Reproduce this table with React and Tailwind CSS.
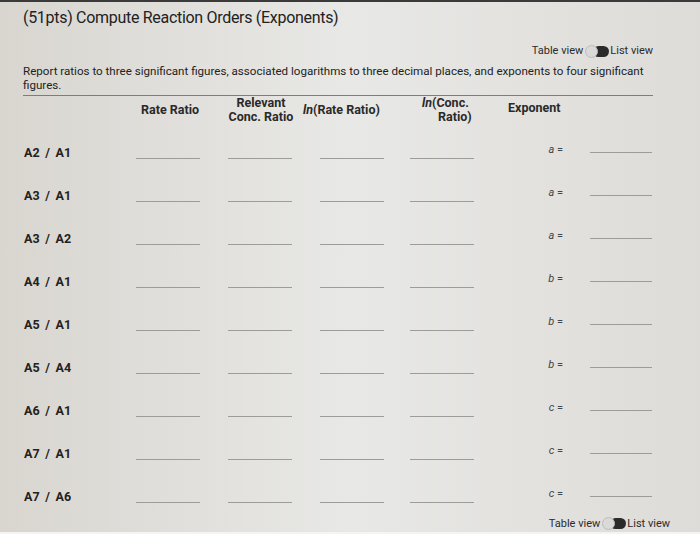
const ROWS = [
  { label: "A2 / A1", v: "a" },
  { label: "A3 / A1", v: "a" },
  { label: "A3 / A2", v: "a" },
  { label: "A4 / A1", v: "b" },
  { label: "A5 / A1", v: "b" },
  { label: "A5 / A4", v: "b" },
  { label: "A6 / A1", v: "c" },
  { label: "A7 / A1", v: "c" },
  { label: "A7 / A6", v: "c" },
];

function ViewToggle() {
  return (
    <div className="flex items-center text-[11px] text-[#2b2b2b]">
      <span>Table view</span>
      <span className="relative ml-[2px] mr-[1px] flex h-[13px] w-[24px] items-center">
        <span className="absolute right-0 h-[11px] w-[16px] rounded-full bg-[#2a2a2a]" />
        <span className="absolute left-0 h-[13px] w-[13px] rounded-full border border-[#bdbdbd] bg-[#d9d9d7]" />
      </span>
      <span>List view</span>
    </div>
  );
}

function Blank() {
  return <div className="mt-[10px] h-px w-[64px] bg-[#9c9c9a]" />;
}

export default function App() {
  return (
    <div
      className="flex h-[534px] w-[700px] flex-col overflow-hidden bg-linear-to-r from-[#d9d6d0] via-[#e8e8e6] to-[#dedcd8] text-[#222]"
      style={{ fontFamily: "Roboto, 'Liberation Sans', sans-serif" }}
    >
      <div className="h-[3px] bg-[#3a3a3a]" />

      <div className="flex-1 px-[23px]">
        {/* title */}
        <h1 className="mt-[6px] text-[16px] font-normal leading-[20px] tracking-[-0.3px] text-[#222]">
          (51pts) Compute Reaction Orders (Exponents)
        </h1>

        <div className="mt-[15px] flex justify-end pr-[24px]">
          <ViewToggle />
        </div>

        <p className="mt-[4px] text-[11.6px] leading-[14px] text-[#222]">
          Report ratios to three significant figures, associated logarithms to three decimal places, and exponents to four significant figures.
        </p>

        <div className="mt-[3px] mr-[24px] h-px bg-[#7d7d7b]" />

        {/* header */}
        <div className="grid h-[26px] grid-cols-[113px_92px_92px_90px_94px_86px_64px] items-center text-[12.5px] font-bold leading-[14px] text-[#2a2a2a]">
          <div />
          <div className="ml-[5px] whitespace-nowrap">Rate Ratio</div>
          <div className="pr-[26px] text-center whitespace-nowrap">
            Relevant
            <br />
            Conc. Ratio
          </div>
          <div className="-ml-[17px] whitespace-nowrap">
            <i>ln</i>(Rate Ratio)
          </div>
          <div className="pl-[12px] whitespace-nowrap">
            <i>ln</i>(Conc.
            <br />
            <span className="pl-[16px]">Ratio)</span>
          </div>
          <div className="-mt-[3px] pl-[4px]">Exponent</div>
          <div />
        </div>

        {/* rows */}
        <div className="mt-[10px]">
          {ROWS.map((r) => (
            <div
              key={r.label}
              className="grid h-[43px] grid-cols-[113px_92px_92px_90px_94px_86px_64px] items-center"
            >
              <div className="pl-[1px] text-[12.5px] font-bold tracking-[0.2px] [word-spacing:2px] whitespace-pre text-[#222]">
                {r.label}
              </div>
              <Blank />
              <Blank />
              <Blank />
              <Blank />
              <div className="-mt-[6px] pr-[27px] text-right text-[11px] text-[#444]">
                <i>{r.v}</i> =
              </div>
              <div className="-mt-[2px] h-px w-[62px] bg-[#9c9c9a]" />
            </div>
          ))}
        </div>

        <div className="-mt-[3px] flex justify-end pr-[7px]">
          <ViewToggle />
        </div>
      </div>

      <div className="h-[3px] bg-[#f4f4f2]" />
    </div>
  );
}
